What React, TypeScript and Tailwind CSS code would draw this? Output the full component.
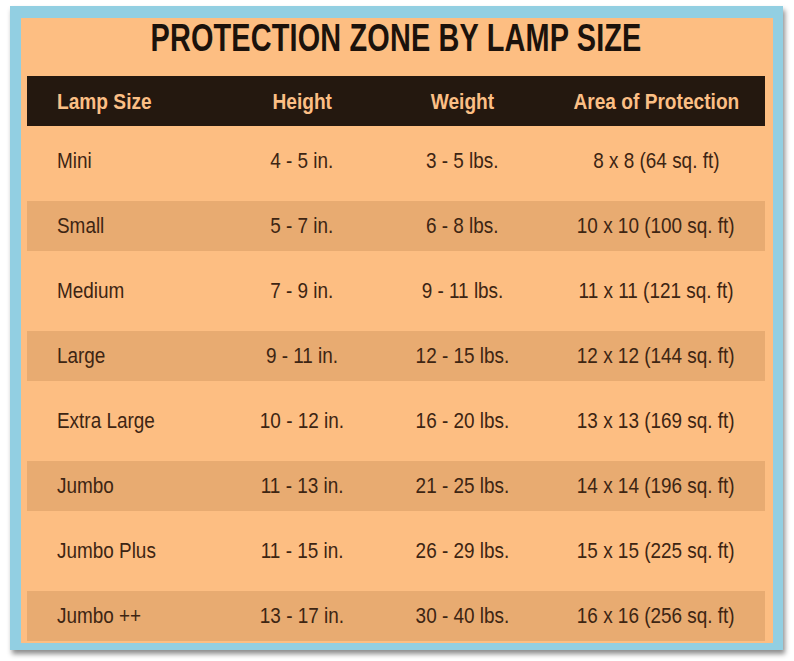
import React from "react";

const rows = [
  ["Mini", "4 - 5 in.", "3 - 5 lbs.", "8 x 8 (64 sq. ft)"],
  ["Small", "5 - 7 in.", "6 - 8 lbs.", "10 x 10 (100 sq. ft)"],
  ["Medium", "7 - 9 in.", "9 - 11 lbs.", "11 x 11 (121 sq. ft)"],
  ["Large", "9 - 11 in.", "12 - 15 lbs.", "12 x 12 (144 sq. ft)"],
  ["Extra Large", "10 - 12 in.", "16 - 20 lbs.", "13 x 13 (169 sq. ft)"],
  ["Jumbo", "11 - 13 in.", "21 - 25 lbs.", "14 x 14 (196 sq. ft)"],
  ["Jumbo Plus", "11 - 15 in.", "26 - 29 lbs.", "15 x 15 (225 sq. ft)"],
  ["Jumbo ++", "13 - 17 in.", "30 - 40 lbs.", "16 x 16 (256 sq. ft)"],
];

const font = { fontFamily: '"Liberation Sans", Arial, sans-serif' };

function Cell({ text, first, bold }: { text: string; first?: boolean; bold?: boolean }) {
  return (
    <div className={first ? "flex items-center pl-[30px]" : "flex items-center justify-center"}>
      <span
        className={
          (bold ? "text-[22px] font-bold scale-x-[0.87] " : "text-[22px] scale-x-[0.86] ") +
          (first ? "inline-block origin-left whitespace-nowrap" : "inline-block origin-center whitespace-nowrap")
        }
      >
        {text}
      </span>
    </div>
  );
}

export default function App() {
  return (
    <div className="w-[794px] h-[661px] bg-white pt-[6px] pl-[10px]" style={font}>
      <div className="w-[773px] h-[644px] bg-[#92cfe2] pt-[12px] pl-[11px] shadow-[2px_4px_5px_rgba(0,0,0,0.45)]">
        <div className="w-[752px] h-[625px] bg-[#fdbe82] pl-[6px] pr-[8px] overflow-hidden">
          <div className="h-[58px] pt-[1px] flex justify-center">
            <span className="inline-block text-[38px] leading-[38px] font-bold text-[#1c120b] scale-x-[0.76] whitespace-nowrap tracking-[0.2px]">
              PROTECTION ZONE BY LAMP SIZE
            </span>
          </div>
          <div className="h-[50px] bg-[#24180f] text-[#fbbf85] grid grid-cols-[200px_150px_170px_218px]">
            <Cell text="Lamp Size" first bold />
            <Cell text="Height" bold />
            <Cell text="Weight" bold />
            <Cell text="Area of Protection" bold />
          </div>
          <div className="pt-[2px]">
            {rows.map((r, i) => (
              <div key={i} className="h-[65px] flex items-center">
                <div
                  className={
                    "h-[50px] w-full grid grid-cols-[200px_150px_170px_218px] text-[#3d2513] " +
                    (i % 2 === 1 ? "bg-[#e8ab71]" : "")
                  }
                >
                  <Cell text={r[0]} first />
                  <Cell text={r[1]} />
                  <Cell text={r[2]} />
                  <Cell text={r[3]} />
                </div>
              </div>
            ))}
          </div>
        </div>
      </div>
    </div>
  );
}
